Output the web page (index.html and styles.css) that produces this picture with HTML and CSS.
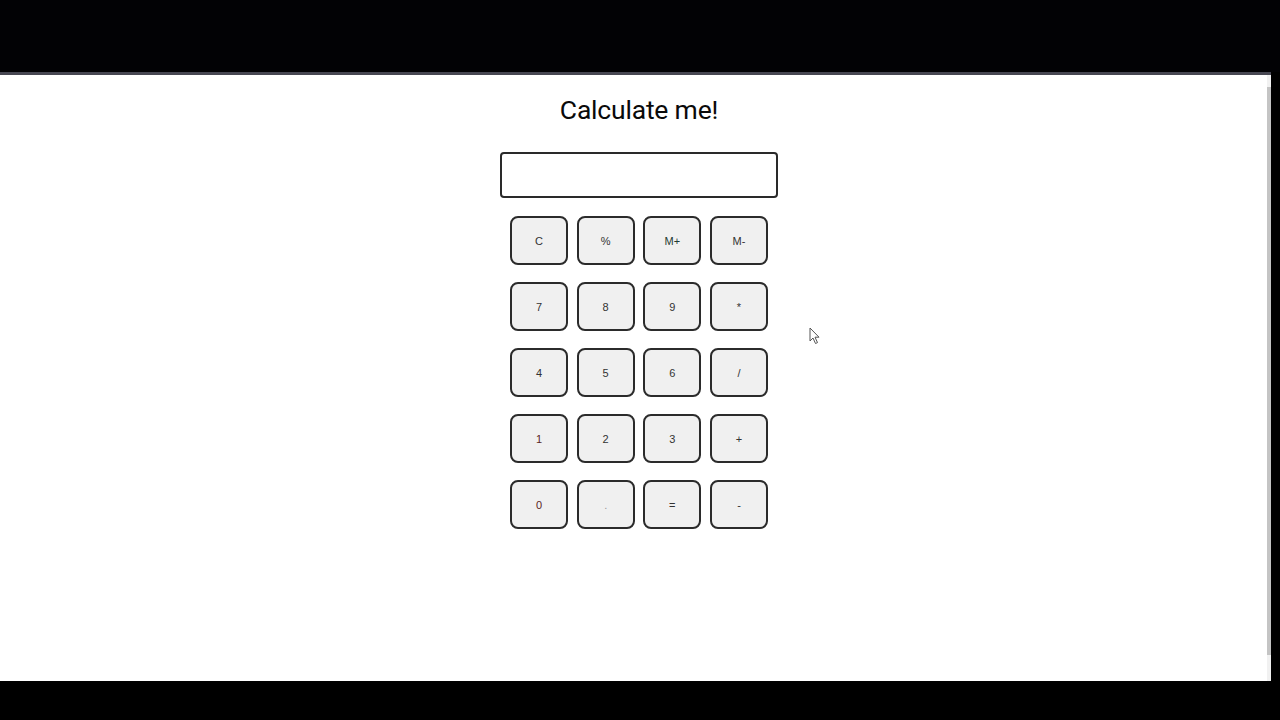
FILE: index.html
```html
<!DOCTYPE html>
<html lang="en">
<head>
<meta charset="utf-8">
<title>Calculate me!</title>
<link rel="stylesheet" href="styles.css">
</head>
<body>
<div class="screen">
  <div class="top-black"></div>
  <div class="frame-line"></div>
  <div class="viewport">
    <main class="page">
      <h1 class="title">Calculate me!</h1>
      <div class="display"></div>
      <div class="keys">
        <button class="key">C</button>
        <button class="key">%</button>
        <button class="key key-mem">M+</button>
        <button class="key">M-</button>
        <button class="key">7</button>
        <button class="key">8</button>
        <button class="key">9</button>
        <button class="key">*</button>
        <button class="key">4</button>
        <button class="key">5</button>
        <button class="key">6</button>
        <button class="key">/</button>
        <button class="key key-red">1</button>
        <button class="key">2</button>
        <button class="key">3</button>
        <button class="key">+</button>
        <button class="key key-red">0</button>
        <button class="key key-faint">.</button>
        <button class="key">=</button>
        <button class="key">-</button>
      </div>
      <svg class="cursor" width="12" height="18" viewBox="0 0 12 18">
        <path d="M1 1 L1 14 L4 11 L6.5 16.5 L8.5 15.6 L6 10.2 L10 10.2 Z" fill="#fff" stroke="#555" stroke-width="1"/>
      </svg>
    </main>
    <div class="scrollbar"><div class="thumb"></div></div>
  </div>
  <div class="bottom-black"></div>
</div>
</body>
</html>
```

FILE: styles.css
```css
* { box-sizing: border-box; }
html, body { margin: 0; padding: 0; }
body {
  background: #000;
  width: 1280px;
  height: 720px;
  overflow: hidden;
}
.screen {
  display: flex;
  flex-direction: column;
  height: 720px;
}
.top-black {
  height: 72px;
  background: #020205;
}
.frame-line {
  height: 3px;
  background: #474752;
  margin-right: 9px;
}
.viewport {
  height: 606px;
  display: flex;
  background: #000;
}
.page {
  position: relative;
  width: 1267px;
  background: #fff;
  padding-left: 11px;
  display: flex;
  flex-direction: column;
  align-items: center;
}
.title {
  margin: 17px 0 0;
  font-family: Roboto, "Liberation Sans", sans-serif;
  font-weight: 400;
  font-size: 26.5px;
  line-height: 36px;
  color: #0a0a0a;
  letter-spacing: -0.2px;
}
.display {
  margin-top: 24px;
  width: 278px;
  height: 46px;
  border: 2px solid #2a2a2a;
  border-radius: 4px;
  background: #fff;
}
.keys {
  margin-top: 18px;
  display: grid;
  grid-template-columns: repeat(4, 58px);
  grid-auto-rows: 49px;
  column-gap: 8.67px;
  row-gap: 17px;
}
.key {
  width: 58px;
  height: 49px;
  border: 2px solid #2b2b2b;
  border-radius: 8px;
  background: #f0f0f0;
  font-family: "Liberation Sans", Arial, sans-serif;
  font-size: 11px;
  color: #333;
  padding: 0;
}
.key-mem { color: #1f3a32; }
.key-red { color: #5a2424; }
.key-faint { color: #999; }
.cursor {
  position: absolute;
  left: 809px;
  top: 252px;
}
.scrollbar {
  width: 4px;
  background: #f1f1f1;
  padding-top: 12px;
}
.thumb {
  height: 568px;
  background: #c4c4c4;
}
.bottom-black {
  flex: 1;
  background: #000;
}
```
